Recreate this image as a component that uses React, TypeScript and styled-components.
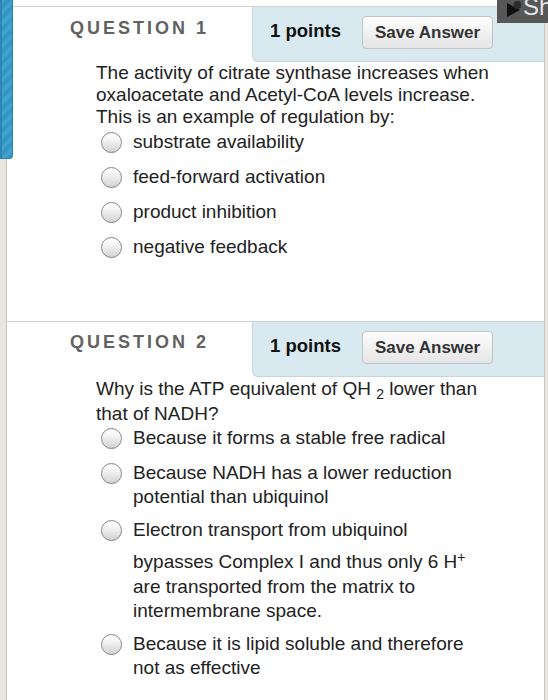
import React from "react";
import styled, { createGlobalStyle } from "styled-components";

const GlobalStyle = createGlobalStyle`
  html, body { margin: 0; padding: 0; }
  body {
    background: #e9e6df;
    font-family: "Liberation Sans", Arial, Helvetica, sans-serif;
    overflow: hidden;
  }
`;

const Page = styled.div`
  position: relative;
  width: 548px;
  height: 700px;
  overflow: hidden;
  background: #e9e6df;
`;

const SideTab = styled.div`
  position: absolute;
  left: 0;
  top: 0;
  width: 12px;
  height: 158px;
  border-right: 1px solid #2b80aa;
  border-bottom: 1px solid #2b80aa;
  border-bottom-right-radius: 4px;
  background: repeating-linear-gradient(
    135deg,
    #3fa3cf 0px,
    #3fa3cf 4px,
    #3696c3 4px,
    #3696c3 8px
  );
  box-shadow: inset 2px 0 0 #2f86b2;
`;

const ShareBadge = styled.div`
  position: absolute;
  top: 0;
  right: 0;
  width: 51px;
  height: 23px;
  background: #575757;
  overflow: hidden;
  display: flex;
  align-items: flex-start;
  gap: 2px;
  padding-left: 9px;
  box-sizing: border-box;
`;

const ShareIcon = styled.svg`
  flex: none;
  margin-top: 1px;
`;

const ShareText = styled.span`
  flex: none;
  color: #e6e6e6;
  font-size: 24px;
  line-height: 24px;
  margin-top: -5px;
  font-family: "Liberation Sans", Arial, sans-serif;
`;

const Card = styled.div`
  margin-left: 6px;
  width: 537px;
  min-height: 700px;
  background: #fff;
  border-left: 1px solid #c6c6c6;
  border-right: 1px solid #c6c6c6;
  padding-top: 6px;
`;

const Question = styled.section<{ $padBottom: number }>`
  border-top: 1px solid #d2d2d2;
  padding-bottom: ${(p) => p.$padBottom}px;
`;

const Header = styled.div`
  display: flex;
  height: 55px;
`;

const Label = styled.div<{ $top: number }>`
  width: 245px;
  box-sizing: border-box;
  padding: ${(p) => p.$top}px 0 0 63px;
  font-size: 18px;
  line-height: 18px;
  font-weight: bold;
  letter-spacing: 3px;
  color: #626262;
`;

const Tab = styled.div`
  flex: 1;
  display: flex;
  align-items: center;
  gap: 21px;
  padding: 0 0 3px 17px;
  background: #d8e9f0;
  border-left: 1px solid #c4d6de;
  border-bottom: 1px solid #c4d6de;
  border-bottom-left-radius: 6px;
`;

const Points = styled.span`
  font-size: 18.5px;
  font-weight: bold;
  color: #111;
  margin-bottom: 4px;
`;

const SaveButton = styled.button`
  height: 33px;
  padding: 0 12px;
  border: 1px solid #c4c4c4;
  border-radius: 4px;
  background: linear-gradient(#fdfdfd, #e5e5e5);
  font-family: "Liberation Sans", Arial, sans-serif;
  font-size: 17px;
  font-weight: bold;
  color: #333;
  cursor: pointer;
`;

const Body = styled.div<{ $lh: number }>`
  padding-left: 89px;
  width: 396px;
  font-size: 19px;
  line-height: ${(p) => p.$lh}px;
  color: #222;
`;

const Prompt = styled.p`
  margin: 0;
`;

const Sub = styled.sub`
  font-size: 14px;
  line-height: 1;
  vertical-align: -4px;
`;

const Sup = styled.sup`
  font-size: 14px;
  line-height: 1;
  vertical-align: 6px;
`;

const Options = styled.div<{ $top: number; $gap: number }>`
  display: flex;
  flex-direction: column;
  gap: ${(p) => p.$gap}px;
  margin-top: ${(p) => p.$top}px;
`;

const OptionRow = styled.label<{ $extra?: number }>`
  display: flex;
  align-items: flex-start;
  gap: 11px;
  padding-left: 5px;
  margin-top: ${(p) => p.$extra ?? 0}px;
`;

const Radio = styled.span<{ $lh: number }>`
  flex: none;
  width: 21px;
  height: 21px;
  box-sizing: border-box;
  margin-top: ${(p) => p.$lh / 2 - 10}px;
  margin-bottom: ${(p) => p.$lh / 2 - 11}px;
  border-radius: 50%;
  border: 1px solid #858585;
  background: linear-gradient(#ffffff, #f2f2f2 40%, #d2d2d2);
  box-shadow: inset 0 1px 1px rgba(255, 255, 255, 0.9), 0 1px 0 rgba(0, 0, 0, 0.05);
`;

const OptionText = styled.div<{ $gap: number }>`
  display: flex;
  flex-direction: column;
  gap: ${(p) => p.$gap}px;
`;

const Para = styled.span``;

type Opt = { parts: React.ReactNode[]; extra?: number };

const q1Options: Opt[] = [
  { parts: ["substrate availability"] },
  { parts: ["feed-forward activation"] },
  { parts: ["product inhibition"] },
  { parts: ["negative feedback"] },
];

const q2Options: Opt[] = [
  { parts: ["Because it forms a stable free radical"] },
  { parts: ["Because NADH has a lower reduction potential than ubiquinol"], extra: 2 },
  {
    parts: [
      "Electron transport from ubiquinol",
      <>
        bypasses Complex I and thus only 6 H<Sup>+</Sup> are transported from
        the matrix to intermembrane space.
      </>,
    ],
  },
  { parts: ["Because it is lipid soluble and therefore not as effective"] },
];

function QuestionBlock(props: {
  num: number;
  labelTop: number;
  lh: number;
  optTop: number;
  optGap: number;
  padBottom: number;
  prompt: React.ReactNode;
  options: Opt[];
}) {
  return (
    <Question $padBottom={props.padBottom}>
      <Header>
        <Label $top={props.labelTop}>QUESTION {props.num}</Label>
        <Tab>
          <Points>1 points</Points>
          <SaveButton>Save Answer</SaveButton>
        </Tab>
      </Header>
      <Body $lh={props.lh}>
        <Prompt>{props.prompt}</Prompt>
        <Options $top={props.optTop} $gap={props.optGap}>
          {props.options.map((o, i) => (
            <OptionRow key={i} $extra={o.extra}>
              <Radio $lh={props.lh} />
              <OptionText $gap={props.optGap}>
                {o.parts.map((p, j) => (
                  <Para key={j}>{p}</Para>
                ))}
              </OptionText>
            </OptionRow>
          ))}
        </Options>
      </Body>
    </Question>
  );
}

export default function App() {
  return (
    <Page>
      <GlobalStyle />
      <Card>
        <QuestionBlock
          num={1}
          labelTop={12}
          lh={22}
          optTop={3}
          optGap={13}
          padBottom={63}
          prompt="The activity of citrate synthase increases when oxaloacetate and Acetyl-CoA levels increase. This is an example of regulation by:"
          options={q1Options}
        />
        <QuestionBlock
          num={2}
          labelTop={11}
          lh={24.5}
          optTop={0}
          optGap={8}
          padBottom={40}
          prompt={
            <>
              Why is the ATP equivalent of QH <Sub>2</Sub> lower than that of
              NADH?
            </>
          }
          options={q2Options}
        />
      </Card>
      <SideTab />
      <ShareBadge>
        <ShareIcon width="15" height="18" viewBox="0 0 15 18">
          <path d="M1 2 L14 9 L1 16 Z" fill="#111" />
          <circle cx="11.5" cy="4" r="4" fill="#2b2b2b" />
        </ShareIcon>
        <ShareText>Sh</ShareText>
      </ShareBadge>
    </Page>
  );
}
